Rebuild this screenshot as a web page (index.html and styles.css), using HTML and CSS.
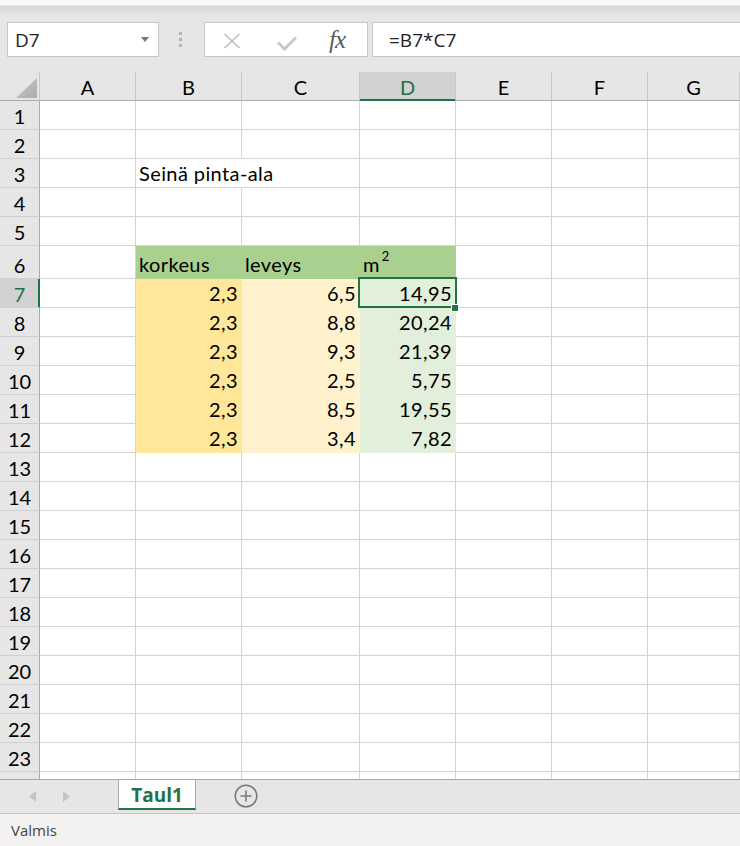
FILE: index.html
```html
<!DOCTYPE html>
<html lang="fi">
<head>
<meta charset="utf-8">
<title>Taul1</title>
<link rel="stylesheet" href="styles.css">
</head>
<body>
<div class="app">
  <div class="top">
    <div class="namebox">
      <span>D7</span>
      <svg class="caret" width="8" height="5" viewBox="0 0 8 5"><path d="M0 0H8L4 5Z" fill="#777"/></svg>
    </div>
    <div class="grip"><i></i><i></i><i></i></div>
    <div class="fxbox">
      <svg class="ico-x" width="18" height="16" viewBox="0 0 18 16"><path d="M1.5 1L16.5 15M16.5 1L1.5 15" stroke="#bdbdbd" stroke-width="1.6" fill="none"/></svg>
      <svg class="ico-ok" width="20" height="15" viewBox="0 0 20 15"><path d="M1 6.5L7.5 13L19 1.5" stroke="#c8c8c8" stroke-width="3" fill="none"/></svg>
      <span class="fx">fx</span>
    </div>
    <div class="formula">=B7*C7</div>
  </div>

  <div class="sheet">
    <div class="ch corner"><svg width="21" height="20" viewBox="0 0 21 20"><defs><linearGradient id="tg" x1="0" y1="0" x2="1" y2="1"><stop offset="0" stop-color="#c9c9c9"/><stop offset="1" stop-color="#acacac"/></linearGradient></defs><path d="M21 0V20H0Z" fill="url(#tg)"/></svg></div>
    <div class="ch">A</div><div class="ch">B</div><div class="ch">C</div><div class="ch sel">D</div><div class="ch">E</div><div class="ch">F</div><div class="ch">G</div>

    <div class="rh">1</div><div class="c"></div><div class="c"></div><div class="c"></div><div class="c"></div><div class="c"></div><div class="c"></div><div class="c"></div>
    <div class="rh">2</div><div class="c"></div><div class="c"></div><div class="c"></div><div class="c"></div><div class="c"></div><div class="c"></div><div class="c"></div>
    <div class="rh">3</div><div class="c"></div><div class="c ov">Seinä pinta-ala</div><div class="c"></div><div class="c"></div><div class="c"></div><div class="c"></div><div class="c"></div>
    <div class="rh">4</div><div class="c"></div><div class="c"></div><div class="c"></div><div class="c"></div><div class="c"></div><div class="c"></div><div class="c"></div>
    <div class="rh">5</div><div class="c"></div><div class="c"></div><div class="c"></div><div class="c"></div><div class="c"></div><div class="c"></div><div class="c"></div>
    <div class="rh">6</div><div class="c"></div><div class="c head">korkeus</div><div class="c head">leveys</div><div class="c head"><span>m<sup class="sup">2</sup></span></div><div class="c"></div><div class="c"></div><div class="c"></div>
    <div class="rh sel">7</div><div class="c"></div><div class="c num gold">2,3</div><div class="c num cream">6,5</div><div class="c num mint active">14,95<span class="handle"></span></div><div class="c"></div><div class="c"></div><div class="c"></div>
    <div class="rh">8</div><div class="c"></div><div class="c num gold">2,3</div><div class="c num cream">8,8</div><div class="c num mint">20,24</div><div class="c"></div><div class="c"></div><div class="c"></div>
    <div class="rh">9</div><div class="c"></div><div class="c num gold">2,3</div><div class="c num cream">9,3</div><div class="c num mint">21,39</div><div class="c"></div><div class="c"></div><div class="c"></div>
    <div class="rh">10</div><div class="c"></div><div class="c num gold">2,3</div><div class="c num cream">2,5</div><div class="c num mint">5,75</div><div class="c"></div><div class="c"></div><div class="c"></div>
    <div class="rh">11</div><div class="c"></div><div class="c num gold">2,3</div><div class="c num cream">8,5</div><div class="c num mint">19,55</div><div class="c"></div><div class="c"></div><div class="c"></div>
    <div class="rh">12</div><div class="c"></div><div class="c num gold">2,3</div><div class="c num cream">3,4</div><div class="c num mint">7,82</div><div class="c"></div><div class="c"></div><div class="c"></div>
    <div class="rh">13</div><div class="c"></div><div class="c"></div><div class="c"></div><div class="c"></div><div class="c"></div><div class="c"></div><div class="c"></div>
    <div class="rh">14</div><div class="c"></div><div class="c"></div><div class="c"></div><div class="c"></div><div class="c"></div><div class="c"></div><div class="c"></div>
    <div class="rh">15</div><div class="c"></div><div class="c"></div><div class="c"></div><div class="c"></div><div class="c"></div><div class="c"></div><div class="c"></div>
    <div class="rh">16</div><div class="c"></div><div class="c"></div><div class="c"></div><div class="c"></div><div class="c"></div><div class="c"></div><div class="c"></div>
    <div class="rh">17</div><div class="c"></div><div class="c"></div><div class="c"></div><div class="c"></div><div class="c"></div><div class="c"></div><div class="c"></div>
    <div class="rh">18</div><div class="c"></div><div class="c"></div><div class="c"></div><div class="c"></div><div class="c"></div><div class="c"></div><div class="c"></div>
    <div class="rh">19</div><div class="c"></div><div class="c"></div><div class="c"></div><div class="c"></div><div class="c"></div><div class="c"></div><div class="c"></div>
    <div class="rh">20</div><div class="c"></div><div class="c"></div><div class="c"></div><div class="c"></div><div class="c"></div><div class="c"></div><div class="c"></div>
    <div class="rh">21</div><div class="c"></div><div class="c"></div><div class="c"></div><div class="c"></div><div class="c"></div><div class="c"></div><div class="c"></div>
    <div class="rh">22</div><div class="c"></div><div class="c"></div><div class="c"></div><div class="c"></div><div class="c"></div><div class="c"></div><div class="c"></div>
    <div class="rh">23</div><div class="c"></div><div class="c"></div><div class="c"></div><div class="c"></div><div class="c"></div><div class="c"></div><div class="c"></div>
    <div class="rh"></div><div class="c"></div><div class="c"></div><div class="c"></div><div class="c"></div><div class="c"></div><div class="c"></div><div class="c"></div>
  </div>

  <div class="tabbar">
    <div class="nav">
      <svg width="7" height="11" viewBox="0 0 7 11"><path d="M7 0V11L0 5.5Z" fill="#c4c4c4"/></svg>
      <svg width="7" height="11" viewBox="0 0 7 11"><path d="M0 0V11L7 5.5Z" fill="#c4c4c4"/></svg>
    </div>
    <div class="tab">Taul1</div>
    <svg class="addsheet" width="24" height="24" viewBox="0 0 24 24"><circle cx="12" cy="12" r="10.8" fill="none" stroke="#7a7a7a" stroke-width="1.5"/><path d="M12 6.5V17.5M6.5 12H17.5" stroke="#7a7a7a" stroke-width="1.6"/></svg>
  </div>

  <div class="status">Valmis</div>
</div>
</body>
</html>
```

FILE: styles.css
```css
* { box-sizing: border-box; }
html, body { margin: 0; padding: 0; }
body {
  width: 740px;
  height: 846px;
  overflow: hidden;
  background: #e6e6e6;
  font-family: Lato, "Noto Sans", sans-serif;
  color: #000;
}
.app { display: flex; flex-direction: column; height: 846px; }

/* formula bar */
.top {
  flex: none;
  height: 72px;
  display: flex;
  align-items: flex-start;
  padding: 22px 0 0 7px;
  background: linear-gradient(#f9f9f9 0, #f9f9f9 5px, #d6d6d6 6px, #e6e6e6 15px);
  font-family: "Open Sans", "Noto Sans", sans-serif;
}
.namebox {
  width: 152px;
  height: 35px;
  border: 1px solid #c6c6c6;
  background: #fff;
  display: flex;
  align-items: center;
  justify-content: space-between;
  padding: 0 9px 0 7px;
  font-size: 19px;
  color: #222;
}
.grip {
  width: 45px;
  height: 35px;
  display: flex;
  flex-direction: column;
  align-items: center;
  justify-content: center;
  gap: 3px;
}
.grip i { display: block; width: 3px; height: 3px; background: #b4b4b4; margin-left: -2px; }
.fxbox {
  width: 164px;
  height: 35px;
  border: 1px solid #c6c6c6;
  background: #fff;
  display: flex;
  align-items: center;
  padding-left: 18px;
}
.ico-x { margin-top: 3px; }
.ico-ok { margin-left: 36px; margin-top: 8px; }
.fx {
  margin-left: 32px;
  font-family: "Liberation Serif", "DejaVu Serif", serif;
  font-style: italic;
  font-size: 25px;
  color: #5a5a5a;
  letter-spacing: -1px;
}
.formula {
  flex: 1;
  height: 35px;
  margin-left: 4px;
  margin-right: -2px;
  border: 1px solid #c6c6c6;
  background: #fff;
  display: flex;
  align-items: center;
  padding-left: 16px;
  font-size: 19px;
  color: #222;
}

/* grid */
.sheet {
  flex: none;
  height: 707px;
  overflow: hidden;
  background: #fff;
  display: grid;
  grid-template-columns: 40px 96px 106px 118px 96px 96px 96px 92px;
  grid-template-rows: repeat(6, 29px) 33px repeat(18, 29px);
}
.c, .ch, .rh {
  border-right: 1px solid #d4d4d4;
  border-bottom: 1px solid #d4d4d4;
  display: flex;
  align-items: flex-end;
  white-space: nowrap;
  min-width: 0;
}
.c {
  padding: 0 3px 2px 3px;
  font-size: 20px;
  letter-spacing: 0.4px;
  line-height: 24px;
}
.ch {
  background: #e6e6e6;
  border-right-color: #c8c8c8;
  border-bottom-color: #ababab;
  justify-content: center;
  font-size: 20px;
  line-height: 24px;
  padding-bottom: 1px;
}
.ch.corner {
  justify-content: flex-end;
  padding: 0 2px 2px 0;
  align-items: flex-end;
}
.ch.sel {
  background: #d2d2d2;
  color: #217346;
  border-bottom-color: #217346;
  box-shadow: inset 0 -1px 0 #217346;
}
.rh {
  background: #e6e6e6;
  border-right-color: #ababab;
  border-bottom-color: #d0d0d0;
  justify-content: center;
  font-size: 20px;
  line-height: 24px;
  padding-bottom: 1px;
}
.rh.sel {
  background: #d2d2d2;
  color: #217346;
  border-right-color: #217346;
  box-shadow: inset -1px 0 0 #217346;
}
.ov { border-right-color: transparent; overflow: visible; position: relative; z-index: 1; }
.num { justify-content: flex-end; }
.head { background: #a9d08e; border-color: #a9d08e; }
.gold { background: #ffe699; border-color: #ffe699; }
.cream { background: #fff2cc; border-color: #fff2cc; }
.mint { background: #e2efda; border-color: #e2efda; }
.sup {
  font-size: 13px;
  line-height: 0;
  vertical-align: 11px;
  margin-left: 2px;
}
.active { position: relative; }
.active::after {
  content: "";
  position: absolute;
  left: -2px;
  top: -2px;
  right: -2px;
  bottom: -1px;
  border: 2px solid #217346;
}
.handle {
  position: absolute;
  left: 91px;
  top: 25px;
  width: 8px;
  height: 8px;
  background: #217346;
  border: 1px solid #fff;
  z-index: 2;
}

/* sheet tabs */
.tabbar {
  flex: none;
  height: 35px;
  border-top: 1px solid #a6a6a6;
  border-bottom: 1px solid #c6c6c6;
  background: #e6e6e6;
  display: flex;
  align-items: flex-start;
  padding-bottom: 3px;
}
.nav {
  width: 118px;
  height: 30px;
  display: flex;
  align-items: center;
  padding-left: 29px;
  gap: 27px;
}
.nav svg { margin-top: 2px; }
.tab {
  width: 78px;
  height: 30px;
  background: #fff;
  border-left: 1px solid #ababab;
  border-right: 1px solid #ababab;
  border-bottom: 2px solid #217346;
  display: flex;
  align-items: center;
  justify-content: center;
  font-family: "Open Sans", "Noto Sans", sans-serif;
  font-weight: 700;
  font-size: 19px;
  color: #217346;
  padding-top: 1px;
}
.addsheet { margin-left: 38px; margin-top: 4px; }

/* status bar */
.status {
  flex: 1;
  background: #f3f2f1;
  display: flex;
  align-items: center;
  padding-left: 11px;
  font-family: "Open Sans", "Noto Sans", sans-serif;
  font-size: 15px;
  color: #444;
}
```
